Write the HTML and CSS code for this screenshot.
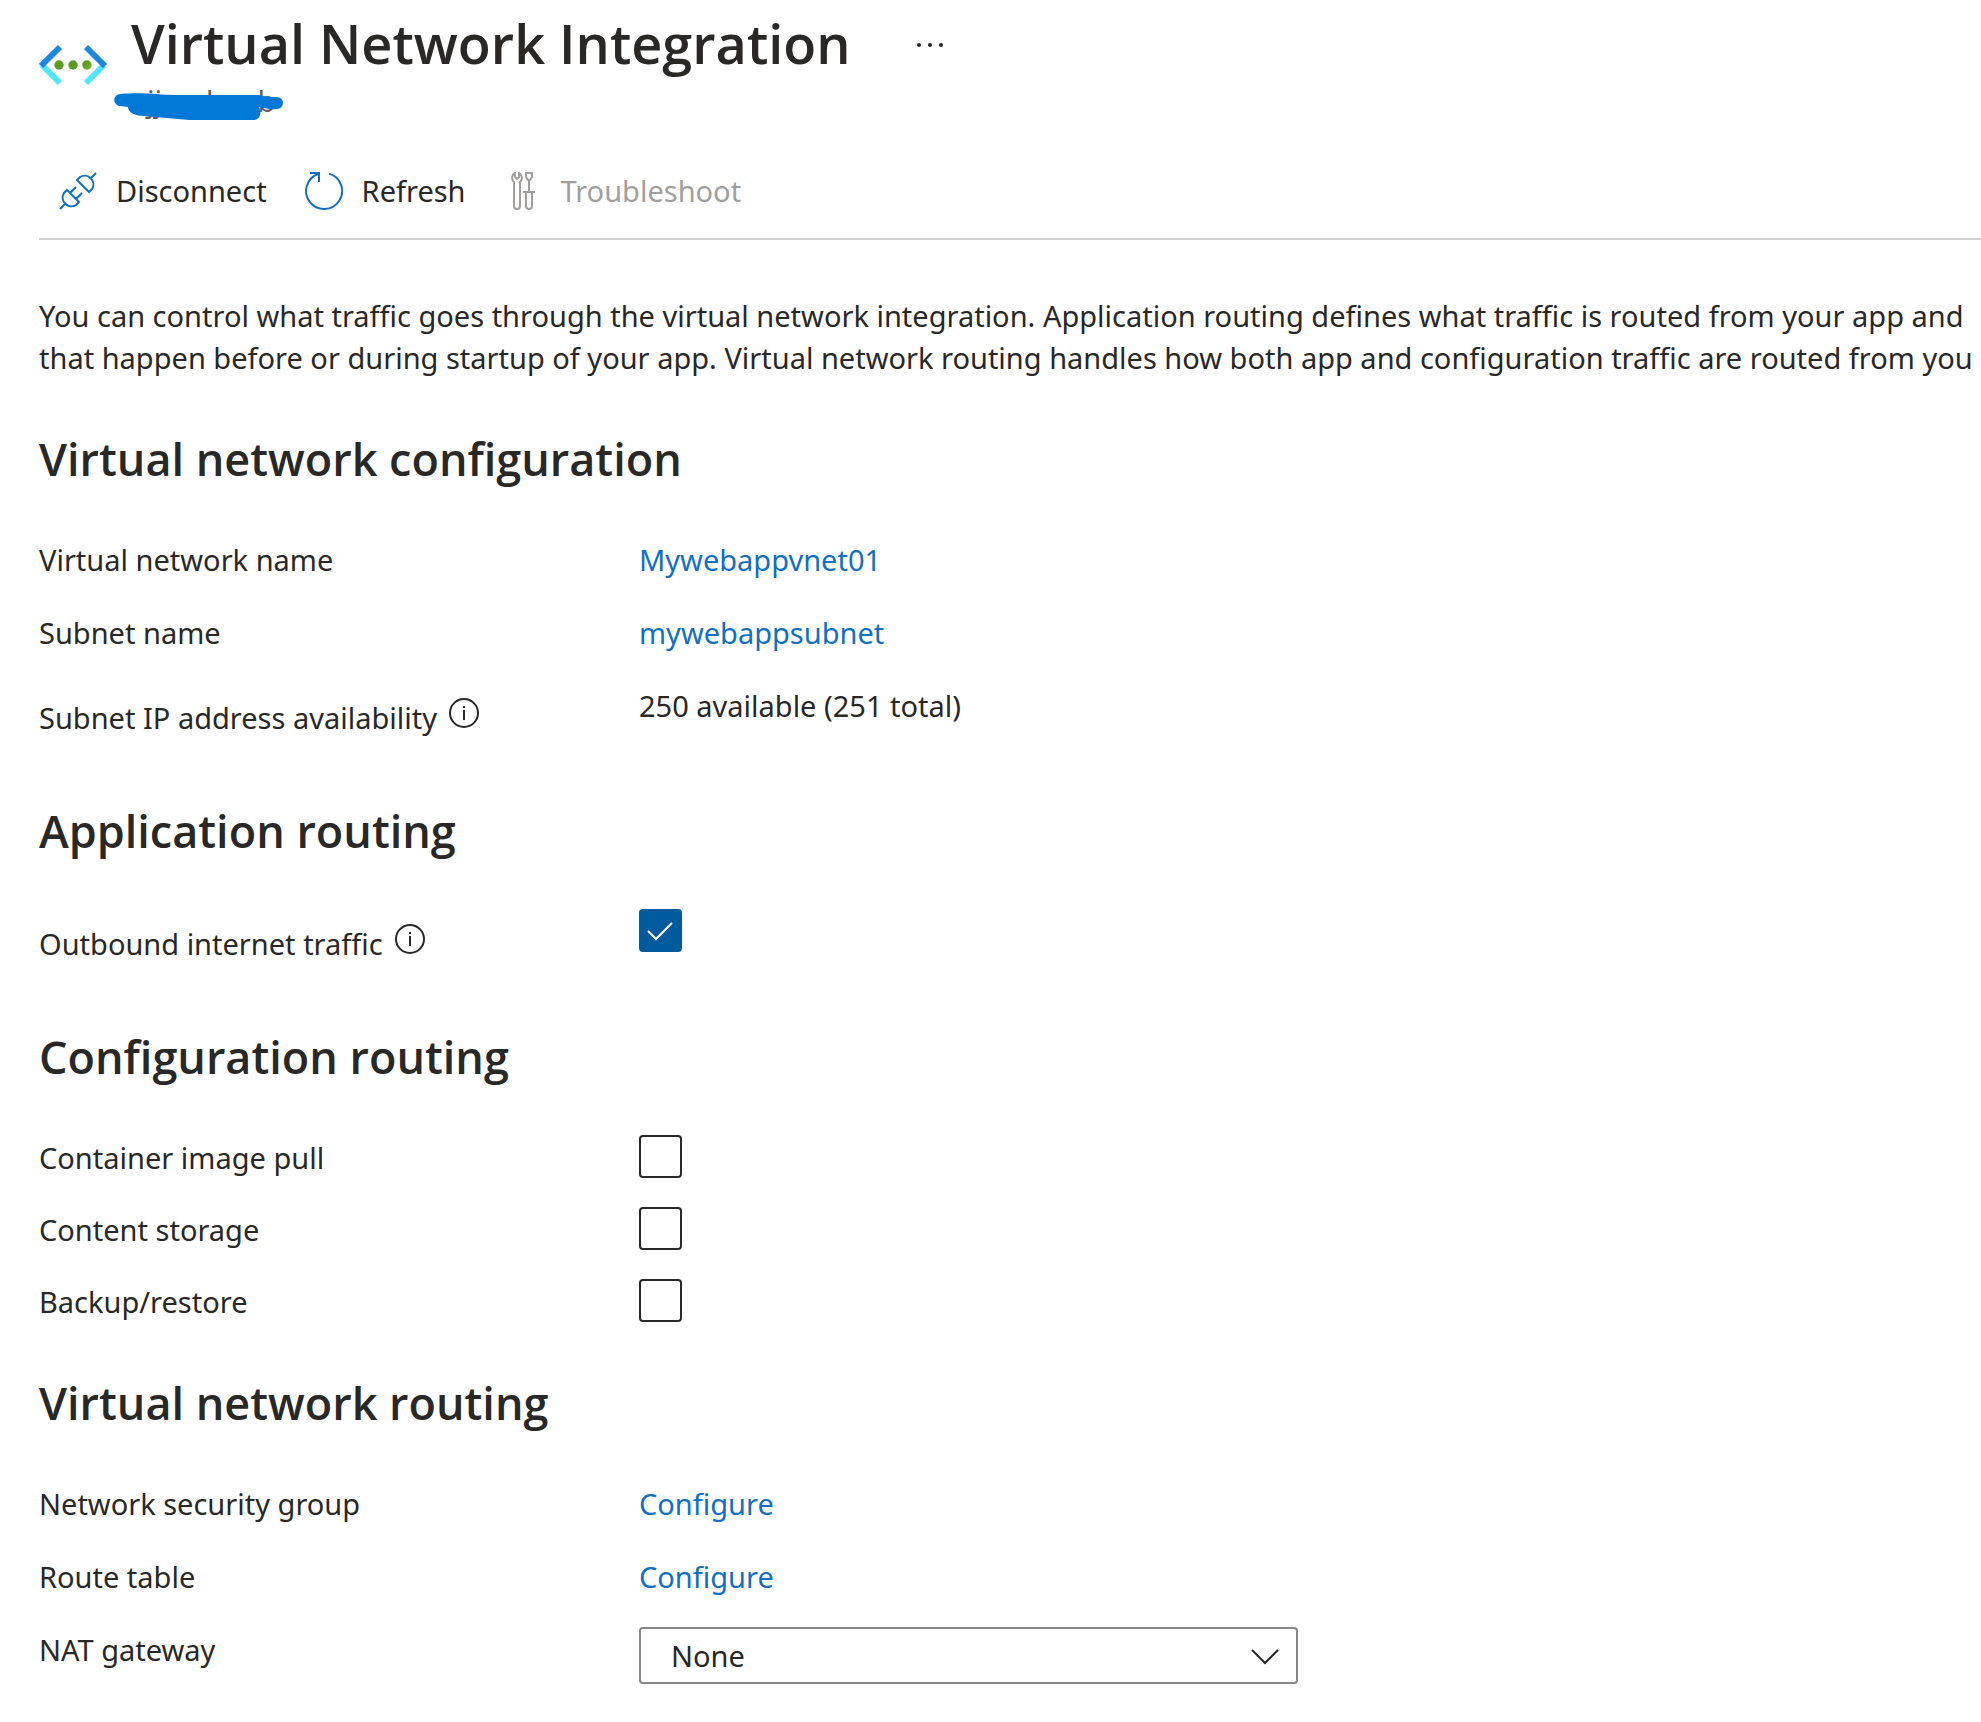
FILE: index.html
```html
<!DOCTYPE html>
<html lang="en">
<head>
  <meta charset="UTF-8">
  <title>Virtual Network Integration</title>
  <link rel="stylesheet" href="styles.css">
</head>
<body>

  <!-- Header -->
  <header class="header">
    <svg class="logo" viewBox="0 0 68 42" aria-hidden="true">
      <defs>
        <linearGradient id="dot" x1="0" y1="0" x2="1" y2="1">
          <stop offset="0" stop-color="#4f8c1a"/>
          <stop offset="1" stop-color="#76bc2d"/>
        </linearGradient>
      </defs>
      <path d="M3 21 L21 39" stroke="#50e6ff" stroke-width="6"/>
      <path d="M65 21 L47 39" stroke="#50e6ff" stroke-width="6"/>
      <path d="M21 3 L2 22" stroke="#1b88dd" stroke-width="6"/>
      <path d="M47 3 L66 22" stroke="#1b88dd" stroke-width="6"/>
      <circle cx="20" cy="21" r="4.7" fill="#5c9c22"/>
      <circle cx="34" cy="21" r="4.7" fill="#5c9c22"/>
      <circle cx="48" cy="21" r="4.7" fill="url(#dot)"/>
    </svg>
    <div class="heading">
      <h1 class="title">Virtual Network Integration</h1>
      <div class="app-name">
        <span>jj</span><span>l</span><span>b</span>
        <svg class="marker" viewBox="0 0 170 30" aria-hidden="true">
          <path d="M6.500 1 C30 -1 45 2 60 2 L145 2 C152 4 158 4 163 4 A6 6 0 0 1 163 16 C157 17 151 15 145 14 C148 20 146 27 140 27 L75 27 C60 26 45 24 30 23 C22 23 14 20 14 14 L6 13 A6 6 0 0 1 6.500 1 Z" fill="#0078d7"/>
        </svg>
      </div>
    </div>
    <button class="more" aria-label="More">
      <svg viewBox="0 0 26 4"><circle cx="2" cy="2" r="2"/><circle cx="13" cy="2" r="2"/><circle cx="24" cy="2" r="2"/></svg>
    </button>
  </header>

  <!-- Toolbar -->
  <div class="toolbar">
    <button class="tool">
      <svg class="tool-icon" viewBox="0 0 38 38" aria-hidden="true">
        <path d="M37 1 L32 6 M18 8 L30 20 L33 17 A8.700 8.700 0 0 0 21 5 Z M1 37 L6 32 M8 18 L20 30 L17 33 A8.700 8.700 0 0 1 5 21 Z M11 21 L17 15 M17 27 L23 21"/>
      </svg>
      Disconnect
    </button>
    <button class="tool">
      <svg class="tool-icon" viewBox="0 0 38 38" aria-hidden="true">
        <path d="M24 1.600 A18 18 0 1 1 13 2 M5 1 H14 V10"/>
      </svg>
      Refresh
    </button>
    <button class="tool" disabled>
      <svg class="tool-icon" viewBox="0 0 38 38" aria-hidden="true">
        <path d="M10 10 A5.500 5.500 0 0 1 11 1 V5 L13 7 L15 5 V1 A5.500 5.500 0 0 1 16 10 V34 A3 3 0 0 1 10 34 Z M22 1 H28 V5 L26 8 H24 L22 5 Z M25 8 V20 M19 20 H31 M22 20 V34 A3 3 0 0 0 28 34 V20"/>
      </svg>
      Troubleshoot
    </button>
  </div>

  <main class="content">
    <p class="intro">You can control what traffic goes through the virtual network integration. Application routing defines what traffic is routed from your app and<br>
    that happen before or during startup of your app. Virtual network routing handles how both app and configuration traffic are routed from you</p>

    <section class="section">
      <h2>Virtual network configuration</h2>
      <div class="rows">
        <div class="row">
          <span class="label">Virtual network name</span>
          <a href="#">Mywebappvnet01</a>
        </div>
        <div class="row">
          <span class="label">Subnet name</span>
          <a href="#">mywebappsubnet</a>
        </div>
        <div class="row">
          <span class="label label-info">Subnet IP address availability
            <svg class="info" viewBox="0 0 30 30" aria-hidden="true"><circle cx="15" cy="15" r="14"/><path d="M15 12 V22 M15 8 V10"/></svg>
          </span>
          <span>250 available (251 total)</span>
        </div>
      </div>
    </section>

    <section class="section">
      <h2>Application routing</h2>
      <div class="rows">
        <div class="row">
          <label class="label label-info" for="outbound">Outbound internet traffic
            <svg class="info" viewBox="0 0 30 30" aria-hidden="true"><circle cx="15" cy="15" r="14"/><path d="M15 12 V22 M15 8 V10"/></svg>
          </label>
          <span class="check">
            <input type="checkbox" id="outbound" checked>
            <svg viewBox="0 0 43 43" aria-hidden="true"><path d="M9 22 L17 30 L33 14"/></svg>
          </span>
        </div>
      </div>
    </section>

    <section class="section">
      <h2>Configuration routing</h2>
      <div class="rows rows-check">
        <div class="row">
          <label class="label" for="image-pull">Container image pull</label>
          <span class="check"><input type="checkbox" id="image-pull"></span>
        </div>
        <div class="row">
          <label class="label" for="storage">Content storage</label>
          <span class="check"><input type="checkbox" id="storage"></span>
        </div>
        <div class="row">
          <label class="label" for="backup">Backup/restore</label>
          <span class="check"><input type="checkbox" id="backup"></span>
        </div>
      </div>
    </section>

    <section class="section">
      <h2>Virtual network routing</h2>
      <div class="rows">
        <div class="row">
          <span class="label">Network security group</span>
          <a href="#">Configure</a>
        </div>
        <div class="row">
          <span class="label">Route table</span>
          <a href="#">Configure</a>
        </div>
        <div class="row">
          <label class="label" for="nat">NAT gateway</label>
          <span class="dropdown">
            <select id="nat">
              <option>None</option>
            </select>
            <svg viewBox="0 0 28 16" aria-hidden="true"><path d="M1 1 L14 14 L27 1"/></svg>
          </span>
        </div>
      </div>
    </section>
  </main>

</body>
</html>
```
FILE: styles.css
```css
* {
  box-sizing: border-box;
}

body {
  margin: 0;
  padding: 8px 0 32px 39px;
  background: #fff;
  color: #292827;
  font-family: 'Segoe UI', 'Noto Sans', 'Open Sans', sans-serif;
  font-size: 29px;
  line-height: 46px;
  overflow-x: hidden;
}

h1, h2 {
  font-family: 'Segoe UI', 'Open Sans', sans-serif;
  font-weight: 600;
}

button {
  font: inherit;
  color: inherit;
  background: none;
  border: none;
  padding: 0;
  cursor: pointer;
}

a {
  color: #1070c4;
  text-decoration: none;
}

a:hover {
  text-decoration: underline;
}

/* Header */
.header {
  display: flex;
  align-items: flex-start;
}

.logo {
  width: 68px;
  height: 42px;
  margin: 36px 24px 0 0;
  fill: none;
}

.title {
  margin: 0;
  font-size: 54px;
  line-height: 70px;
}

.app-name {
  position: relative;
  display: flex;
  gap: 44px;
  height: 42px;
  padding-left: 16px;
  color: #605e5c;
  line-height: 46px;
}

.marker {
  position: absolute;
  left: -17px;
  top: 15px;
  width: 170px;
  height: 30px;
}

.more {
  margin: 12px 0 0 66px;
}

.more svg {
  display: block;
  width: 26px;
  height: 4px;
  margin: 23px 0;
  fill: #292827;
}

/* Toolbar */
.toolbar {
  display: flex;
  gap: 38px;
  height: 120px;
  padding: 51px 20px 27px;
  border-bottom: 2px solid #d2d0ce;
}

.tool {
  display: flex;
  align-items: center;
  gap: 19px;
}

.tool-icon {
  width: 38px;
  height: 38px;
  fill: none;
  stroke: #1070c4;
  stroke-width: 2;
}

.tool:disabled {
  color: #a19f9d;
  cursor: default;
}

.tool:disabled .tool-icon {
  stroke: #a19f9d;
}

/* Content */
.content {
  padding-top: 55px;
}

.intro {
  margin: 0;
  padding-bottom: 2px;
  line-height: 42px;
  white-space: nowrap;
}

.section {
  margin-top: 46px;
}

.section h2 {
  margin: 0 0 46px;
  font-size: 45px;
  line-height: 64px;
}

.rows {
  display: grid;
  gap: 27px;
}

.rows-check {
  gap: 26px;
}

.row {
  display: flex;
  align-items: flex-start;
}

.label {
  width: 600px;
}

.label-info {
  display: flex;
  align-items: center;
  gap: 12px;
  line-height: 70px;
}

.info {
  width: 30px;
  height: 30px;
  margin-bottom: 10px;
  fill: none;
  stroke: #292827;
  stroke-width: 2;
}

/* Checkboxes */
.check {
  position: relative;
}

.check input {
  display: block;
  appearance: none;
  width: 43px;
  height: 43px;
  margin: 0;
  border: 2px solid #292827;
  border-radius: 4px;
  background: #fff;
}

.check input:checked {
  border-color: #005a9e;
  background: #005a9e;
}

.check svg {
  position: absolute;
  left: 0;
  top: 0;
  width: 43px;
  height: 43px;
  fill: none;
  stroke: #fff;
  stroke-width: 2;
  pointer-events: none;
}

/* Dropdown */
.dropdown {
  position: relative;
  width: 659px;
}

.dropdown select {
  appearance: none;
  display: block;
  width: 100%;
  height: 57px;
  padding: 0 60px 0 30px;
  border: 2px solid #8a8886;
  border-radius: 4px;
  background: #fff;
  color: inherit;
  font: inherit;
}

.dropdown svg {
  position: absolute;
  right: 19px;
  top: 22px;
  width: 28px;
  height: 16px;
  fill: none;
  stroke: #292827;
  stroke-width: 2;
  pointer-events: none;
}
```
